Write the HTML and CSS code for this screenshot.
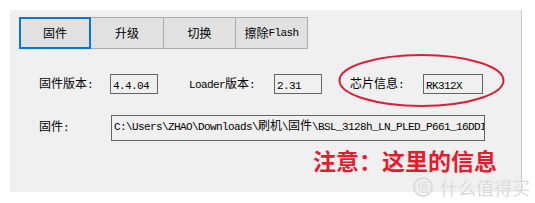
FILE: index.html
```html
<!DOCTYPE html>
<html lang="zh-CN">
<head>
<meta charset="utf-8">
<title>固件</title>
<link rel="stylesheet" href="styles.css">
</head>
<body>
<div class="panel">
  <div class="tabs">
    <div class="tab active">固件</div>
    <div class="tab w73">升级</div>
    <div class="tab">切换</div>
    <div class="tab">擦除<span class="m">Flash</span></div>
  </div>
  <div class="row1">
    <span class="lab l1">固件版本<span class="m">:</span></span>
    <span class="box b1"><span class="m">4.4.04</span></span>
    <span class="lab l2"><span class="m">Loader</span>版本<span class="m">:</span></span>
    <span class="box b2"><span class="m">2.31</span></span>
    <span class="lab l3">芯片信息<span class="m">:</span></span>
    <span class="box b3"><span class="m">RK312X</span></span>
  </div>
  <div class="row2">
    <span class="lab l4">固件<span class="m">:</span></span>
    <span class="box path"><span class="m">C:\Users\ZHAO\Downloads\</span>刷机<span class="m">\</span>固件<span class="m">\BSL_3128h_LN_PLED_P661_16DDI</span></span>
  </div>
  <div class="note">注意：这里的信息</div>
  <svg class="ring" width="169" height="57" viewBox="0 0 169 57">
    <ellipse cx="84.5" cy="28.5" rx="82" ry="25.5" fill="none" stroke="#d8203a" stroke-width="2"/>
  </svg>
  <div class="wm"><span class="wm-c">值</span><span class="wm-t">什么值得买</span></div>
</div>
</body>
</html>
```
FILE: styles.css
```css
html, body {
  margin: 0;
  padding: 0;
  background: #ffffff;
}
body {
  width: 535px;
  height: 203px;
  overflow: hidden;
  font-family: "Noto Sans CJK SC", sans-serif;
  font-size: 12px;
  color: #000;
}
.m {
  font-family: "Liberation Mono", monospace;
  font-size: 11px;
  letter-spacing: -0.6px;
}
.panel {
  position: relative;
  box-sizing: border-box;
  margin: 10px 0 0 10px;
  width: 512px;
  height: 182px;
  background: #f0f0f0;
  border-right: 1px solid #c6c6c6;
  padding: 7px 0 0 9px;
}
.tabs {
  display: flex;
  height: 32px;
}
.tab {
  box-sizing: border-box;
  width: 73px;
  height: 32px;
  margin-left: -1px;
  background: #e1e1e1;
  border: 1px solid #adadad;
  display: flex;
  align-items: center;
  justify-content: center;
  line-height: 14px;
}
.tab.active {
  position: relative;
  z-index: 1;
  margin-left: 0;
  width: 72px;
  border: 2px solid #0078d7;
  box-shadow: 0 2px 1px -1px #fbe3cf;
}
.tab.w73 { width: 74px; }
.row1 {
  display: flex;
  align-items: center;
  height: 20px;
  margin: 25px 0 0 20px;
}
.lab {
  display: block;
  line-height: 20px;
  white-space: nowrap;
}
.l1 { width: 71px; }
.l2 { width: 85px; margin-left: 31px; }
.l3 { width: 73px; margin-left: 28px; }
.box {
  box-sizing: border-box;
  display: block;
  height: 20px;
  border: 1px solid #646464;
  background: #f0f0f0;
  padding: 0 2px;
  line-height: 18px;
  white-space: nowrap;
  overflow: hidden;
}
.b1, .b2 { width: 48px; }
.b3 { width: 60px; }
.row2 {
  display: flex;
  align-items: flex-start;
  margin: 21px 0 0 20px;
}
.l4 { width: 72px; line-height: 22px; margin-top: 0; }
.path {
  width: 374px;
  height: 26px;
  line-height: 17px;
  padding: 0 0 0 2px;
}
.note {
  margin: 9px 0 0 294px;
  font-size: 23px;
  line-height: 21px;
  font-weight: 700;
  color: #e41c2e;
  white-space: nowrap;
}
.ring {
  position: absolute;
  left: 327px;
  top: 42px;
}
.wm {
  position: absolute;
  left: 403px;
  top: 167px;
  display: flex;
  align-items: center;
  color: #d9d9d9;
  text-shadow: 0 0 1px #ffffff;
  white-space: nowrap;
}
.wm-c {
  box-sizing: border-box;
  width: 20px;
  height: 20px;
  border: 2px solid #dadada;
  border-radius: 50%;
  font-size: 12px;
  line-height: 16px;
  text-align: center;
}
.wm-t {
  margin-left: 7px;
  font-size: 18px;
  line-height: 18px;
}
```
